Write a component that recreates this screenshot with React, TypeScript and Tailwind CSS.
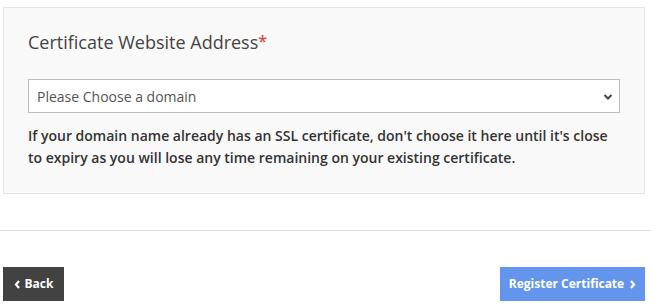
import React from "react";

export default function App() {
  return (
    <div className="w-[651px] h-[308px] bg-white overflow-hidden" style={{ fontFamily: '"Open Sans", sans-serif' }}>
      <div className="pt-[7px] px-[3px] pr-[6px]">
        <div className="border border-[#e3e3e3] bg-[#f9f9f9] h-[187px] pl-[24px] pr-[24px] pt-[21px]">
          <div className="h-[26px] text-[18px] leading-[26px] text-[#444]">
            Certificate Website Address<span className="text-[#e8463b] text-[16px] leading-none font-semibold relative -top-[2px]">*</span>
          </div>
          <div className="mt-[24px] relative h-[34px] border border-[#bdbdbd] bg-white flex items-center pl-[8px]">
            <span className="text-[14px] text-[#555]">Please Choose a domain</span>
            <svg className="absolute right-[6px] top-[13px]" width="10" height="8" viewBox="0 0 10 8">
              <path d="M1.5 2 L5 5.5 L8.5 2" fill="none" stroke="#444" strokeWidth="2" />
            </svg>
          </div>
          <p className="mt-[12px] text-[14px] leading-[22px] font-semibold text-[#333]">
            If your domain name already has an SSL certificate, don't choose it here until it's close to expiry as you will lose any time remaining on your existing certificate.
          </p>
        </div>
      </div>
      <div className="mt-[36px] border-t border-[#dedede]" />
      <div className="mt-[36px] flex justify-between pl-[3px] pr-[6px]">
        <button className="h-[34px] w-[61px] bg-[#424242] text-white text-[12px] font-bold flex items-center justify-center gap-[4px]">
          <svg width="7" height="9" viewBox="0 0 7 9">
            <path d="M5 1 L2 4.5 L5 8" fill="none" stroke="white" strokeWidth="2.2" />
          </svg>
          Back
        </button>
        <button className="h-[34px] w-[145px] bg-[#6495ed] text-white text-[12px] font-bold flex items-center justify-center gap-[5px]">
          Register Certificate
          <svg width="7" height="9" viewBox="0 0 7 9">
            <path d="M2 1 L5 4.5 L2 8" fill="none" stroke="white" strokeWidth="2.2" />
          </svg>
        </button>
      </div>
    </div>
  );
}
